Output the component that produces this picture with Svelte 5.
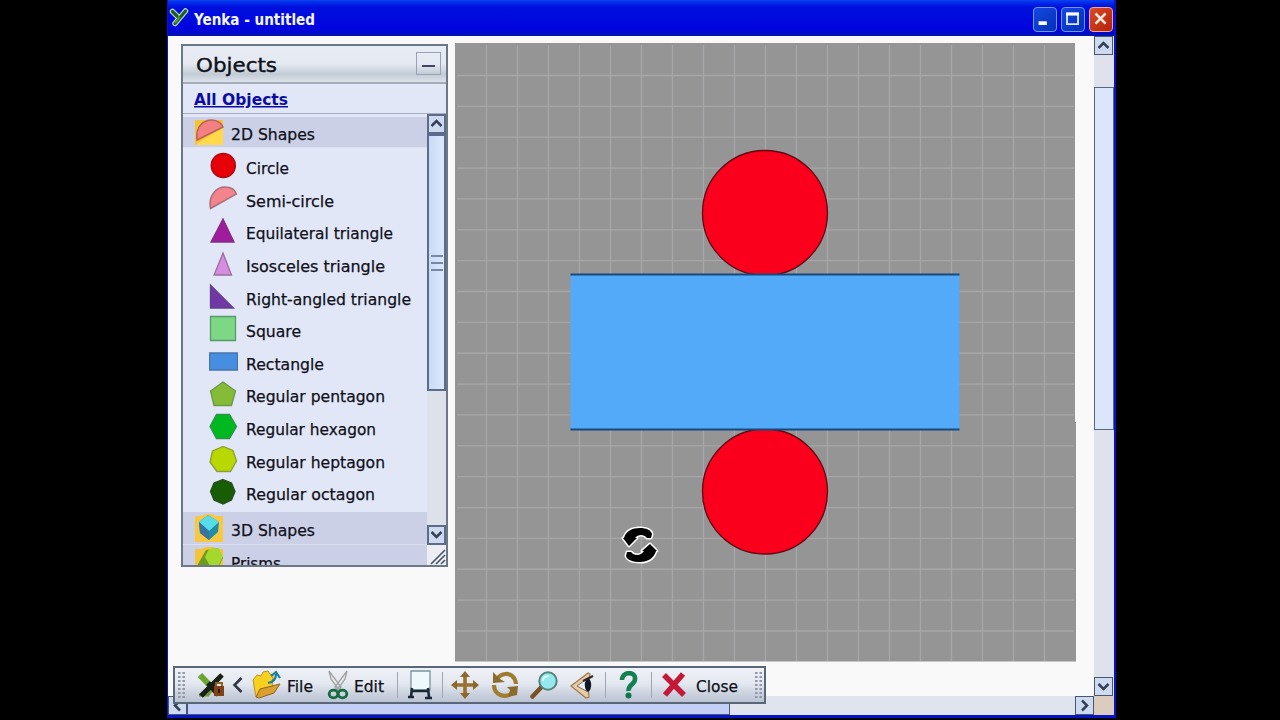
<script>
  const shapes = [
    { name: "Circle", kind: "circle", fill: "#e80008", stroke: "#a80c14", width: 43 },
    { name: "Semi-circle", kind: "semi", fill: "#f4848c", stroke: "#a87078", width: 88 },
    { name: "Equilateral triangle", points: "14,2 25,25 2,25", fill: "#a01c9c", stroke: "#7c3088", width: 147 },
    { name: "Isosceles triangle", points: "14,3 22.5,25 5,25", fill: "#d68ce0", stroke: "#987098", width: 139 },
    { name: "Right-angled triangle", points: "1.5,2 1.5,25 24.5,25", fill: "#7038a4", stroke: "#604088", width: 165 },
    { name: "Square", points: "1.5,1.5 26.5,1.5 26.5,25.5 1.5,25.5", fill: "#7cd884", stroke: "#58986c", width: 55 },
    { name: "Rectangle", points: "0.5,5 28.5,5 28.5,22 0.5,22", fill: "#468ee0", stroke: "#4874ac", width: 78 },
    { name: "Regular pentagon", points: "14,2 26.5,11 22.5,25.5 5,25.5 1.5,11", fill: "#84bc38", stroke: "#6c9848", width: 139 },
    { name: "Regular hexagon", points: "7.5,1.5 20.5,1.5 27.5,13.5 20.5,25.5 7.5,25.5 1,13.5", fill: "#00b820", stroke: "#309048", width: 130 },
    { name: "Regular heptagon", points: "14,0.5 24,4.5 27.5,15 21.5,25.5 8,25.5 1,16 3.5,5", fill: "#b8d800", stroke: "#8c9c38", width: 139 },
    { name: "Regular octagon", points: "14,1.5 22.5,5 26,13.5 22.5,22 14,26 5,22 1.5,13.5 5,5", fill: "#185c04", stroke: "#284c20", width: 129 }
  ];

  const columns = Array.from({ length: 19 }, (_, i) => 31.5 + i * 31);
  const rows = Array.from({ length: 19 }, (_, i) => 32.5 + i * 30.86);
</script>

{#snippet label(text, width, size)}
  <svg class="label" {width} height="24">
    <text x="0" y="17" textLength={width} lengthAdjust="spacingAndGlyphs" font-size={size}>{text}</text>
  </svg>
{/snippet}

{#snippet arrow(turn)}
  <svg width="17" height="17" viewBox="0 0 17 17">
    <path d="M3.5 11 8.5 6l5 5" transform="rotate({turn} 8.5 8.5)" fill="none" stroke="#344058" stroke-width="2.5" />
  </svg>
{/snippet}

<div class="window">
  <header>
    <svg class="logo" width="20" height="20" viewBox="0 0 20 20">
      <path d="M3.500 3.500 8 8M16.500 3 6 15.500" stroke="#b8dcd0" stroke-width="5.500" stroke-linecap="round" />
      <path d="M3.500 3.500 8 8M16.500 3 6 15.500" stroke="#205c24" stroke-width="3.200" stroke-linecap="round" />
      <path d="M6 15l5-6" stroke="#64a02c" stroke-width="1.500" />
    </svg>
    <div class="title">{@render label("Yenka - untitled", 121, 15)}</div>
    <div class="buttons">
      <span class="winbtn"><svg viewBox="0 0 24 24"><path d="M5 16.5h9" stroke="#fff" stroke-width="4" /></svg></span>
      <span class="winbtn"><svg viewBox="0 0 24 24"><path d="M5.5 6.5v11h12v-11z" fill="none" stroke="#d8e8ff" stroke-width="2" /><path d="M4.5 6.5h14" stroke="#fff" stroke-width="3.5" /></svg></span>
      <span class="winbtn quit"><svg viewBox="0 0 24 24"><path d="m6 6 11 11M17 6 6 17" stroke="#ffe8d8" stroke-width="2.7" /></svg></span>
    </div>
  </header>

  <div class="body">
    <main>
      <section class="objects">
        <div class="head">
          {@render label("Objects", 81, 20)}
          <span class="collapse"></span>
        </div>
        <div class="all">{@render label("All Objects", 94, 15)}</div>
        <div class="listing">
          <div class="list">
            <div class="group first">
              <svg class="folder" width="30" height="28" viewBox="0 0 30 28">
                <path d="M1 2h28v25H1z" fill="#f4c438" />
                <path d="M1 27 29 9v18z" fill="#ffd84c" />
                <path d="M3 22C1 8 10 2 18 2c6 0 10 4 11 7z" fill="#f48084" stroke="#b86450" stroke-width="1.5" />
              </svg>
              {@render label("2D Shapes", 84, 15.5)}
            </div>
            {#each shapes as s}
              <div class="item">
                <svg class="shape" width="29" height="28" viewBox="0 0 29 28">
                  {#if s.kind === "circle"}
                    <circle cx="14.3" cy="13.5" r="12" fill={s.fill} stroke={s.stroke} stroke-width="1.5" />
                  {:else if s.kind === "semi"}
                    <path d="M1.5 23.5C-1 10 8 2 16 2c6 0 10 3 11.5 7z" fill={s.fill} stroke={s.stroke} stroke-width="1.5" />
                  {:else}
                    <polygon points={s.points} fill={s.fill} stroke={s.stroke} stroke-width="1.3" />
                  {/if}
                </svg>
                {@render label(s.name, s.width, 15.5)}
              </div>
            {/each}
            <div class="group solid">
              <svg class="folder" width="30" height="30" viewBox="0 0 30 30">
                <path d="M1 3h7l3-2h9v2h9v26H1z" fill="#f8c840" />
                <path d="m14 2 11 7-1 10-9 8-9-7-1-11z" fill="#208ca8" />
                <path d="m14 2 11 7-10 9L5 9z" fill="#58dcec" />
                <path d="m5 9 10 9v9l-9-7z" fill="#3874a0" />
              </svg>
              {@render label("3D Shapes", 84, 15.5)}
            </div>
            <div class="group">
              <svg class="folder" width="30" height="30" viewBox="0 0 30 30">
                <path d="M1 3h7l3-2h9v2h9v26H1z" fill="#f4c438" />
                <path d="m4 18 8-14 12-2 5 10-5 10-20 7z" fill="#6c9c20" />
                <path d="m15 3 9-1 5 8-4 9-9 1-5-9z" fill="#a4d82c" />
              </svg>
              {@render label("Prisms", 50, 15.5)}
            </div>
          </div>
          <div class="scroll">
            <span class="arrow">{@render arrow(0)}</span>
            <span class="thumb"><i></i><i></i><i></i></span>
            <span class="track"></span>
            <span class="arrow">{@render arrow(180)}</span>
            <svg class="grip" width="20" height="20" viewBox="0 0 20 20">
              <path d="M4 19 18 5M9 19l9-9M14 19l4-4" stroke="#485468" stroke-width="1.6" />
            </svg>
          </div>
        </div>
      </section>

      <svg class="canvas" width="622" height="619" viewBox="0 0 622 619">
        <path d="M0 0h620v379h1v239.500H0z" fill="#959595" />
        <g stroke="#a7a7a9" stroke-width="1.3">
          {#each columns as x}
            <line x1={x} x2={x} y1="2" y2="618" />
          {/each}
          {#each rows as y}
            <line x1="2" x2="619" y1={y} y2={y} />
          {/each}
        </g>
        <circle cx="310" cy="170" r="62.500" fill="#fb001c" stroke="#600810" stroke-width="1.3" />
        <circle cx="310" cy="448.500" r="62.500" fill="#fb001c" stroke="#600810" stroke-width="1.3" />
        <path d="M115.500 231h389v156h-389z" fill="#53aaf9" />
        <path d="M115.500 231.500h389M115.500 386.500h389" stroke="#164a7c" stroke-width="1.8" />
        <!-- rotate pointer -->
        <g transform="translate(167 483)" stroke="#fff" stroke-width="3" stroke-linejoin="round" paint-order="stroke">
          <path d="M2 12C4 5 10 2 18 2c6 0 11 2 12 6l-1 4h-4c-3-4-9-4-12 0h2l-8 8-6-8z" />
          <path d="M34 25c-2 7-8 11-16 11-7 0-13-2-14-6l1-4h4c3 4 10 4 13-1h-2l8-7 7 7z" />
        </g>
      </svg>
    </main>

    <aside class="vscroll">
      <span class="arrow">{@render arrow(0)}</span>
      <span class="vthumb"></span>
      <span class="arrow">{@render arrow(180)}</span>
    </aside>
  </div>

  <footer>
    <span class="arrow">{@render arrow(270)}</span>
    <span class="hthumb"></span>
    <span class="arrow right">{@render arrow(90)}</span>
    <span class="corner"></span>
  </footer>

  <nav class="toolbar">
    <span class="dots"></span>
    <svg class="yenka" width="29" height="28" viewBox="0 0 29 28">
      <path d="M3 4 22 24" stroke="#6ca42c" stroke-width="6" />
      <path d="M2 24h9L25 4" stroke="#709838" stroke-width="3" fill="none" />
      <path d="M4 25 25 4M11 12l9 10" stroke="#182018" stroke-width="5" />
      <path d="M17 15h10v10H17z" fill="#804018" />
      <path d="M19 15v-3h6v3" fill="none" stroke="#906020" stroke-width="2" />
      <path d="M22 18v4" stroke="#301808" stroke-width="2" />
    </svg>
    <svg class="back" width="12" height="18" viewBox="0 0 12 18">
      <path d="M9.500 2 2.500 9l7 7" fill="none" stroke="#303848" stroke-width="2.600" />
    </svg>
    <svg class="open" width="30" height="30" viewBox="0 0 30 30">
      <path d="m2 10 4-5 4 1 2-4 5-1 2 3 3 1-1 14L5 27z" fill="#f8d020" stroke="#c09020" />
      <path d="m5 27 4-8 20-5-6 9-15 5z" fill="#d8a030" stroke="#906020" />
      <path d="M17 13c6-1 8-4 8-9m-5 2 5-4 4 6" fill="none" stroke="#188098" stroke-width="2.200" />
    </svg>
    {@render label("File", 26, 15.5)}
    <svg class="cut" width="22" height="30" viewBox="0 0 22 30">
      <path d="m2 1 2 8 8 11 2-3zM20 1l-2 8-8 11-2-3z" fill="#eee" stroke="#a0a0a4" stroke-width="1.300" />
      <ellipse cx="6.500" cy="24" rx="4.300" ry="3.800" fill="none" stroke="#146c40" stroke-width="2.800" />
      <ellipse cx="15.500" cy="24" rx="4.300" ry="3.800" fill="none" stroke="#146c40" stroke-width="2.800" />
    </svg>
    {@render label("Edit", 30, 15.5)}
    <i class="sep one"></i>
    <svg class="stand" width="24" height="30" viewBox="0 0 24 30">
      <path d="M3 1h19v19H3z" fill="#eef9fb" stroke="#78949c" stroke-width="1.300" />
      <path d="M4 18 3 27M20 18l1 9M4 21h17M0 27h6M17 28h7" stroke="#182838" stroke-width="2.600" />
    </svg>
    <i class="sep two"></i>
    <svg class="move" width="28" height="28" viewBox="0 0 28 28">
      <path d="M14 4v20M4 14h20" stroke="#98702c" stroke-width="3.600" />
      <path d="m14 0 5 6H9zM14 28l5-6H9zM0 14l6-5v10zM28 14l-6-5v10z" fill="#8c682c" />
    </svg>
    <svg class="turn" width="28" height="28" viewBox="0 0 28 28">
      <path d="M6 8c4-6 13-7 17-1 1 2 2 3 2 6M3 14c0 10 11 14 18 8" fill="none" stroke="#a07c30" stroke-width="4.200" />
      <path d="M2 1v11l12-1-5-3zM27 15l-11 1 3 3-2 7 9-2z" fill="#8c6c2c" />
    </svg>
    <svg class="find" width="28" height="28" viewBox="0 0 28 28">
      <path d="m2.500 25.500 9-9.500" stroke="#785024" stroke-width="4.500" stroke-linecap="round" />
      <circle cx="18" cy="10" r="8.700" fill="#94e8ee" stroke="#54847c" stroke-width="2" />
      <path d="M13 10c0-4 3-5 6-5" fill="none" stroke="#d8ffff" stroke-width="2" />
    </svg>
    <svg class="eye" width="26" height="28" viewBox="0 0 26 28">
      <path d="m1 15 17-13 2 1-2 10 1 13-3 1z" fill="#e4cca8" stroke="#a0784c" stroke-width="1.200" />
      <path d="m7 15 11-8v14z" fill="#e8f0fc" stroke="#906844" />
      <ellipse cx="18" cy="14" rx="3.200" ry="6.500" fill="#101828" />
      <path d="m13 10 10-5" stroke="#302420" stroke-width="2" />
    </svg>
    <i class="sep three"></i>
    <svg class="help" width="20" height="28" viewBox="0 0 20 28">
      <path d="M3 9C3 0 17 0 16 8c0 6-7 5-6.500 12" fill="none" stroke="#128050" stroke-width="4.600" />
      <circle cx="9.500" cy="24.500" r="3" fill="#107448" />
    </svg>
    <i class="sep four"></i>
    <svg class="cross" width="26" height="26" viewBox="0 0 26 26">
      <path d="m3 3 20 20M22 2 4 23" stroke="#c41838" stroke-width="5.500" />
    </svg>
    {@render label("Close", 42, 15.5)}
    <span class="dots end"></span>
  </nav>
</div>

<style>
  :global(body) {
    background: #000;
    overflow: hidden;
  }
  .window {
    position: relative;
    box-sizing: border-box;
    width: 949px;
    height: 718px;
    margin-left: 167px;
    border: solid #0713c4;
    border-width: 0 2px 3px 1px;
    background: #f9f9fa;
    font-family: "DejaVu Sans", Verdana, sans-serif;
    display: flex;
    flex-direction: column;
  }
  svg {
    display: block;
    flex: none;
  }
  .label {
    overflow: visible;
    fill: #101018;
    stroke: #101018;
    stroke-width: 0.25px;
  }
  header {
    box-sizing: border-box;
    height: 36px;
    flex: none;
    display: flex;
    align-items: center;
    padding: 3px 1px 0 1px;
    background: linear-gradient(#0844ec 0, #0428ec 3px, #0010dc 7px, #0004e0 28px, #000cc4 34px, #0818a0 36px);
  }
  .logo {
    margin-bottom: 4px;
  }
  .title {
    margin-left: 5px;
  }
  .title :global(.label) {
    fill: #f4f6ff;
    stroke: none;
    font-family: "DejaVu Sans Condensed", sans-serif;
    font-weight: bold;
  }
  .buttons {
    margin-left: auto;
    display: flex;
    gap: 4px;
  }
  .winbtn {
    box-sizing: border-box;
    width: 24px;
    height: 25px;
    border: 1px solid #6c98f4;
    border-radius: 4px;
    background: linear-gradient(135deg, #1448e0, #0430b8);
  }
  .quit {
    border-color: #f0a898;
    background: linear-gradient(135deg, #d84c28, #b42008);
  }
  .body {
    flex: 1;
    min-height: 0;
    display: flex;
  }
  main {
    flex: 1;
    display: flex;
    align-items: flex-start;
    gap: 7px;
    padding: 7px 0 0 13px;
  }
  .objects {
    box-sizing: border-box;
    width: 267px;
    height: 523px;
    margin-top: 1px;
    border: 2px solid #6c7888;
    background: #e2e7f8;
    display: flex;
    flex-direction: column;
    overflow: hidden;
  }
  .head {
    box-sizing: border-box;
    height: 38px;
    display: flex;
    align-items: center;
    justify-content: space-between;
    padding: 0 5px 0 13px;
    border-bottom: 2px solid #a4acb8;
    background: linear-gradient(#e8ecf4, #e4e9f2 50%, #c2cbd5 78%, #dce2ea);
  }
  .head :global(.label) {
    margin-top: 6px;
    stroke-width: 0.4px;
  }
  .collapse {
    box-sizing: border-box;
    width: 25px;
    height: 23px;
    margin-bottom: 2px;
    padding: 12px 5px 0;
    border: 1px solid #9ca0b4;
  }
  .collapse::after {
    content: "";
    display: block;
    height: 2px;
    background: #404468;
  }
  .all {
    box-sizing: border-box;
    height: 30px;
    padding: 4px 0 0 11px;
    border-bottom: 1px solid #a8b0c0;
  }
  .all :global(.label) {
    fill: #0c0ca4;
    font-weight: bold;
    stroke: none;
    text-decoration: underline;
  }
  .listing {
    flex: 1;
    min-height: 0;
    display: flex;
  }
  .list {
    width: 244px;
    overflow: hidden;
  }
  .group {
    box-sizing: border-box;
    height: 33px;
    display: flex;
    align-items: center;
    gap: 7px;
    padding-left: 11px;
    background: #cbd0e7;
    border-bottom: 1px solid #dce0f0;
  }
  .first {
    margin: 3px 0 2.5px;
    height: 31px;
  }
  .solid {
    margin-top: 3px;
  }
  .group :global(.label) {
    margin-top: 6px;
  }
  .first :global(.label) {
    margin-top: 5px;
  }
  .item {
    height: 32.6px;
    display: flex;
    align-items: center;
    gap: 8px;
    padding-left: 26px;
  }
  .item :global(.label) {
    margin-top: 5px;
  }
  .shape {
    margin-bottom: 1px;
  }
  .scroll {
    width: 19px;
    display: flex;
    flex-direction: column;
    background: #dde1ea;
  }
  .arrow {
    box-sizing: border-box;
    width: 19px;
    height: 19px;
    flex: none;
    border: 1px solid #48586c;
    background: #cedaf0;
  }
  .scroll .arrow {
    border-width: 2px;
    border-color: #5c6c88;
    height: 20px;
  }
  .scroll .arrow :global(svg) {
    margin: -1px;
  }
  .thumb {
    box-sizing: border-box;
    height: 257px;
    border: 2px solid #5c6c8c;
    background: linear-gradient(90deg, #c8dcf4, #dce8fc);
    display: flex;
    flex-direction: column;
    justify-content: center;
    gap: 5px;
    padding: 0 1px 0 2px;
  }
  .thumb i {
    height: 2px;
    background: #7888a4;
  }
  .track {
    flex: 1;
  }
  .grip {
    background: #eceef4;
  }
  .vscroll {
    width: 20px;
    display: flex;
    flex-direction: column;
    background: #dfe2ec;
  }
  .vscroll .arrow:last-child {
    margin-top: auto;
  }
  .vthumb {
    box-sizing: border-box;
    height: 343px;
    margin-top: 32px;
    border: 1px solid #586884;
    background: #dce6fa;
  }
  footer {
    height: 19px;
    flex: none;
    display: flex;
    background: #e0e4ee;
  }
  .hthumb {
    box-sizing: border-box;
    width: 543px;
    border: 1px solid #48587c;
    background: #c5cef5;
  }
  .right {
    margin-left: auto;
  }
  .corner {
    width: 20px;
    background: #dccbbf;
  }
  .toolbar {
    position: absolute;
    left: 5px;
    top: 666px;
    box-sizing: border-box;
    width: 593px;
    height: 38px;
    border: 2px solid #586878;
    background: linear-gradient(#eef1f6, #e4e8f0 45%, #c8cfdc 80%, #bcc4d4);
    display: flex;
    align-items: center;
  }
  .toolbar > :global(.label) {
    margin-top: 4px;
  }
  .dots {
    width: 9px;
    height: 28px;
    margin-left: 2px;
    background-image: radial-gradient(#8c94a4 1px, transparent 1.5px);
    background-size: 4.5px 4px;
  }
  .end {
    margin-left: auto;
    margin-right: 1px;
  }
  .yenka {
    margin-left: 11px;
  }
  .back {
    margin-left: 6px;
  }
  .open {
    margin: 0 6px 0 7px;
  }
  .cut {
    margin: 0 5px 0 14px;
  }
  .sep {
    width: 1px;
    height: 26px;
    background: #a0a6b2;
  }
  .one {
    margin-left: 13px;
  }
  .stand {
    margin-left: 10px;
  }
  .two {
    margin-left: 10px;
  }
  .move {
    margin-left: 8px;
  }
  .turn {
    margin-left: 12px;
  }
  .find {
    margin-left: 11px;
  }
  .eye {
    margin-left: 12px;
  }
  .three {
    margin-left: 9px;
  }
  .help {
    margin-left: 13px;
  }
  .four {
    margin-left: 12px;
  }
  .cross {
    margin: 0 9px;
  }
</style>
